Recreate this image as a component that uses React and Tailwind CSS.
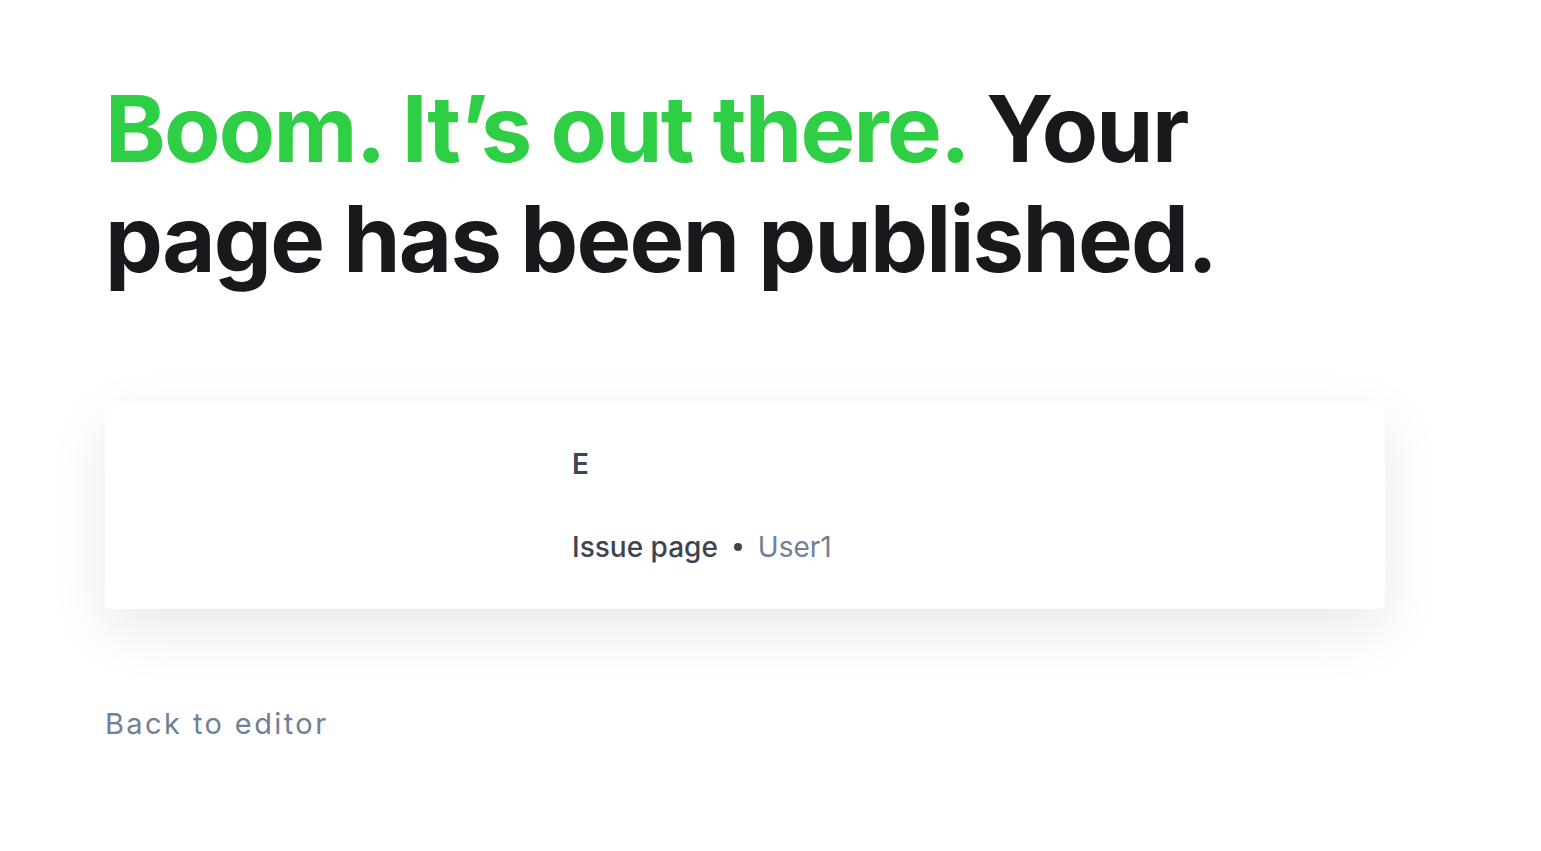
import React from "react";

const App = () => {
    return (
        <div className="min-h-screen bg-white font-['Inter','Liberation_Sans',sans-serif]">
            <div className="pl-[105px] pt-[74px] w-[1385px]">
                <h1 className="text-[92px] leading-[110px] font-bold tracking-[-0.019em] text-[#18191c] w-[1180px]">
                    <span className="text-[#2fcf45]">Boom. It’s out there.</span> Your page has been published.
                </h1>

                <div className="mt-[108px] h-[207px] bg-white rounded-md shadow-[0_20px_60px_rgba(0,0,0,0.09)] flex">
                    <div className="w-[467px] shrink-0" />
                    <div className="pt-[48px] flex flex-col">
                        <p className="text-[28px] font-semibold text-[#3d4350] leading-none">E</p>
                        <div className="mt-[55px] flex items-center text-[28px] leading-none">
                            <span className="font-medium text-[#3d4350]">Issue page</span>
                            <span className="mx-[16px] w-[8px] h-[8px] rounded-full bg-[#3d4350]" />
                            <span className="text-[#718096]">User1</span>
                        </div>
                    </div>
                </div>

                <a href="#" className="block mt-[100px] text-[29px] tracking-[2.4px] text-[#718096] leading-none">Back to editor</a>
            </div>
        </div>
    )
}

export default App
